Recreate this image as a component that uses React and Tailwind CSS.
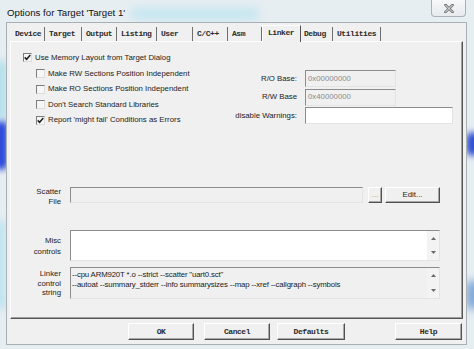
import React from 'react';

const sunken =
  'border border-t-[#8c8c8c] border-l-[#8c8c8c] border-r-[#e4e4e4] border-b-[#e4e4e4]';

const Check = ({ checked }) => (
  <span className="w-[9px] h-[9px] shrink-0 flex items-center justify-center bg-[#f6f6f6] border border-t-[#7c7c7c] border-l-[#7c7c7c] border-r-[#dcdcdc] border-b-[#dcdcdc]">
    {checked && (
      <svg width="7" height="7" viewBox="0 0 7 7">
        <path d="M0.7 3.4 L2.6 5.3 L6.3 1.1" stroke="#1e1e1e" strokeWidth="1.5" fill="none" />
      </svg>
    )}
  </span>
);

const CheckRow = ({ checked, label, className }) => (
  <div className={`flex items-center gap-[3px] ${className}`}>
    <Check checked={checked} />
    <span>{label}</span>
  </div>
);

const Btn = ({ children, className }) => (
  <div
    className={`h-[17px] flex items-center justify-center bg-[#f0f0f0] border border-t-white border-l-white border-r-[#505050] border-b-[#505050] shadow-[inset_-1px_-1px_0_#a8a8a8] ${className}`}
  >
    {children}
  </div>
);

const Arrows = () => (
  <div className="w-[12px] h-full flex flex-col items-center justify-between py-[6px] bg-[#f3f3f3]">
    <svg width="5" height="3" viewBox="0 0 5 3">
      <path d="M0 3 L2.5 0 L5 3 Z" fill="#6a6a6a" />
    </svg>
    <svg width="5" height="3" viewBox="0 0 5 3">
      <path d="M0 0 L2.5 3 L5 0 Z" fill="#6a6a6a" />
    </svg>
  </div>
);

const tabs = [
  ['Device', 'w-[34px]'],
  ['Target', 'w-[37px]'],
  ['Output', 'w-[35px]'],
  ['Listing', 'w-[40px]'],
  ['User', 'w-[36px]'],
  ['C/C++', 'w-[35px]'],
  ['Asm', 'w-[34px]'],
];

const App = () => {
  return (
    <div className="relative w-[474px] h-[349px] overflow-hidden bg-[#e7eef2] font-['Liberation_Sans',Arial,sans-serif] text-[7.8px] text-[#1b1b1b] leading-none">
      {/* aero glass blur behind the frame */}
      <div className="absolute left-[-6px] top-[120px] w-[14px] h-[50px] rounded-full bg-[#2a48d8] blur-[3px]" />
      <div className="absolute left-[-4px] top-[60px] w-[10px] h-[60px] rounded-full bg-[#a9dcea] blur-[4px]" />
      <div className="absolute left-[-4px] top-[220px] w-[10px] h-[90px] rounded-full bg-[#b9e2ef] blur-[4px]" />
      <div className="absolute right-[-6px] top-[132px] w-[14px] h-[24px] rounded-full bg-[#3050d0] blur-[3px]" />
      <div className="absolute right-[-6px] top-[280px] w-[14px] h-[30px] rounded-full bg-[#7fa6d6] blur-[4px]" />
      <div className="absolute left-[130px] top-[8px] w-[130px] h-[12px] rounded-full bg-[#c4e6f0] blur-[5px]" />

      <div className="relative flex flex-col h-full">
        <div className="h-[22px] flex items-start justify-between">
          <span className="mt-[8px] ml-[7px] text-[9.7px] text-[#111]">Options for Target 'Target 1'</span>
          <div className="mr-[8px] w-[35px] h-[17px] flex items-center justify-center rounded-b-[4px] border border-t-0 border-[#aab2b8] bg-gradient-to-b from-[#f6f8f9] to-[#e6eaed]">
            <svg width="10" height="9" viewBox="0 0 10 9">
              <path d="M1.5 1 L8.5 8 M8.5 1 L1.5 8" stroke="#777" strokeWidth="2.6" strokeLinecap="square" />
              <path d="M1.5 1 L8.5 8 M8.5 1 L1.5 8" stroke="#f4f4f4" strokeWidth="0.9" />
            </svg>
          </div>
        </div>

        <div className="ml-[6px] w-[461px] h-[323px] bg-[#f0f0f0] border border-[#a9b0b5] flex flex-col">
          <div className="ml-[3px] w-[453px] flex flex-col">
            {/* tab headers */}
            <div className="h-[15px] mt-[3px] flex items-end pl-[1px] font-['Liberation_Mono',monospace] font-bold text-[8px] tracking-[-0.45px] text-[#2c2c2c]">
              {tabs.map(([t, w]) => (
                <div key={t} className={`${w} h-[14px] flex items-center pl-[4px] border-r border-r-[#6e6e6e]`}>
                  {t}
                </div>
              ))}
              <div className="w-[39px] h-[17px] mb-[-1px] flex items-center pl-[5px] pb-[2px] bg-[#f0f0f0] border border-b-0 border-t-white border-l-white border-r-[#555] relative z-10">
                Linker
              </div>
              <div className="w-[32px] h-[14px] flex items-center pl-[3px] border-r border-r-[#6e6e6e]">Debug</div>
              <div className="w-[48px] h-[14px] flex items-center pl-[4px] border-r border-r-[#6e6e6e]">Utilities</div>
            </div>

            {/* tab panel */}
            <div className="h-[278px] border border-t-white border-l-white border-r-[#555] border-b-[#555] shadow-[inset_-1px_-1px_0_#a0a0a0] flex flex-col">
              <div className="h-[145px] flex">
                <div className="w-[224px] flex flex-col pt-[7px] pl-[12px]">
                  <CheckRow checked label="Use Memory Layout from Target Dialog" className="h-[17px]" />
                  <CheckRow label="Make RW Sections Position Independent" className="h-[15.5px] ml-[13px]" />
                  <CheckRow label="Make RO Sections Position Independent" className="h-[15.5px] ml-[13px]" />
                  <CheckRow label="Don't Search Standard Libraries" className="h-[15.5px] ml-[13px]" />
                  <CheckRow checked label="Report 'might fail' Conditions as Errors" className="h-[15.5px] ml-[13px]" />
                </div>
                <div className="flex flex-col pt-[28px] gap-[1.5px]">
                  <div className="flex items-center h-[17px]">
                    <span className="w-[62px] text-right">R/O Base:</span>
                    <div className={`ml-[8px] w-[91px] h-full flex items-center pl-[2px] bg-[#f0f0f0] text-[#8a8a8a] ${sunken}`}>0x00000000</div>
                  </div>
                  <div className="flex items-center h-[17px]">
                    <span className="w-[62px] text-right">R/W Base</span>
                    <div className={`ml-[8px] w-[91px] h-full flex items-center pl-[2px] bg-[#f0f0f0] text-[#8a8a8a] ${sunken}`}>0x40000000</div>
                  </div>
                  <div className="flex items-center h-[17px]">
                    <span className="w-[62px] text-right">disable Warnings:</span>
                    <div className={`ml-[8px] w-[148px] h-full bg-white ${sunken}`} />
                  </div>
                </div>
              </div>

              <div className="flex items-center h-[16px]">
                <div className="w-[50px] text-right leading-[10px] pt-[4px]">
                  Scatter
                  <br />
                  File
                </div>
                <div className={`ml-[9px] w-[293px] h-full bg-[#f0f0f0] ${sunken}`} />
                <Btn className="ml-[5px] w-[14px] !h-[16px] text-[#999]">...</Btn>
                <Btn className="ml-[3px] w-[55px] !h-[16px]">Edit...</Btn>
              </div>

              <div className="flex items-center h-[31px] mt-[27px]">
                <div className="w-[50px] text-right leading-[11px]">
                  Misc
                  <br />
                  controls
                </div>
                <div className={`ml-[9px] w-[370px] h-full bg-white flex justify-end ${sunken}`}>
                  <Arrows />
                </div>
              </div>

              <div className="flex items-center h-[32px] mt-[6px]">
                <div className="w-[50px] text-right leading-[9.7px] pt-[1px]">
                  Linker
                  <br />
                  control
                  <br />
                  string
                </div>
                <div className={`ml-[9px] w-[370px] h-full bg-[#f0f0f0] flex ${sunken}`}>
                  <div className="flex-1 pl-[1px] pt-[2px] leading-[10px] tracking-[-0.15px]">
                    --cpu ARM920T *.o --strict --scatter "uart0.sct"
                    <br />
                    --autoat --summary_stderr --info summarysizes --map --xref --callgraph --symbols
                  </div>
                  <Arrows />
                </div>
              </div>
            </div>
          </div>

          {/* dialog buttons */}
          <div className="flex mt-[4px] font-['Liberation_Mono',monospace] font-bold text-[8px] tracking-[-0.45px] text-[#2c2c2c]">
            <Btn className="ml-[121px] w-[66px]">OK</Btn>
            <Btn className="ml-[10px] w-[66px]">Cancel</Btn>
            <Btn className="ml-[7px] w-[68px]">Defaults</Btn>
            <Btn className="ml-[50px] w-[67px]">Help</Btn>
          </div>
        </div>
      </div>
    </div>
  );
};

export default App;
